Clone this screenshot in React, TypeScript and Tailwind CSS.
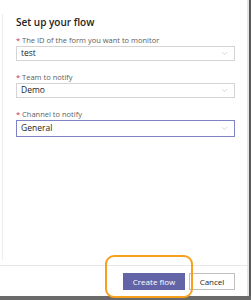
import { ChevronDown } from 'lucide-react';

const fields = [
  { label: 'The ID of the form you want to monitor', value: 'test', active: false },
  { label: 'Team to notify', value: 'Demo', active: false },
  { label: 'Channel to notify', value: 'General', active: true },
];

export default function App() {
  return (
    <div
      className="relative w-[251px] h-[300px] flex flex-col bg-white overflow-hidden"
      style={{ fontFamily: '"Open Sans", "Noto Sans", sans-serif' }}
    >
      <div className="flex flex-1 min-h-0">
        <div className="flex-1 flex flex-col">
          {/* Body */}
          <div className="flex-1 flex">
            <div className="w-[2px]" />
            <div className="mt-[14px] mb-[5px] border-l border-[#ececec]" />
            <div className="flex-1 flex flex-col pl-[13px] pr-[12px] pt-[16px]">
              <h2 className="text-[10px] font-semibold text-[#252423] leading-[12px]">Set up your flow</h2>
              <div className="flex flex-col gap-[11px] mt-[7px]">
                {fields.map((f) => (
                  <div key={f.label} className="flex flex-col">
                    <label className="text-[7.5px] leading-[10px] text-[#605e5c] mb-[1px]">
                      <span className="text-[#c4314b]">*</span> {f.label}
                    </label>
                    <div
                      className={`flex items-center justify-between h-[15px] pl-[4px] pr-[5px] border ${
                        f.active ? 'border-[#7f82c4] h-[17px]' : 'border-[#d6d4d2]'
                      }`}
                    >
                      <span className="text-[8.5px] text-[#252423]">{f.value}</span>
                      <ChevronDown size={9} strokeWidth={1.2} className="text-[#a9a7a5]" />
                    </div>
                  </div>
                ))}
              </div>
            </div>
          </div>
          {/* Footer */}
          <div className="h-[31px] border-t border-[#e6e6e6] flex items-center justify-end gap-[4px] pr-[12px] pt-[1px]">
            <button className="w-[62px] h-[17px] bg-[#6264a7] text-white text-[8px] leading-none">Create flow</button>
            <button className="w-[46px] h-[17px] bg-white border border-[#c2c0be] text-[#252423] text-[8px] leading-none">Cancel</button>
          </div>
        </div>
        <div className="w-[2px] bg-[#e4e4e4]" />
        <div className="w-[2px] bg-[#5a5a5a]" />
      </div>
      <div className="h-[4px] bg-[#6a6a6a] shrink-0" />
      {/* Annotation highlight */}
      <div className="absolute left-[105px] top-[255px] w-[88px] h-[43px] rounded-[9px] border-2 border-[#f7a01e]" />
    </div>
  );
}
